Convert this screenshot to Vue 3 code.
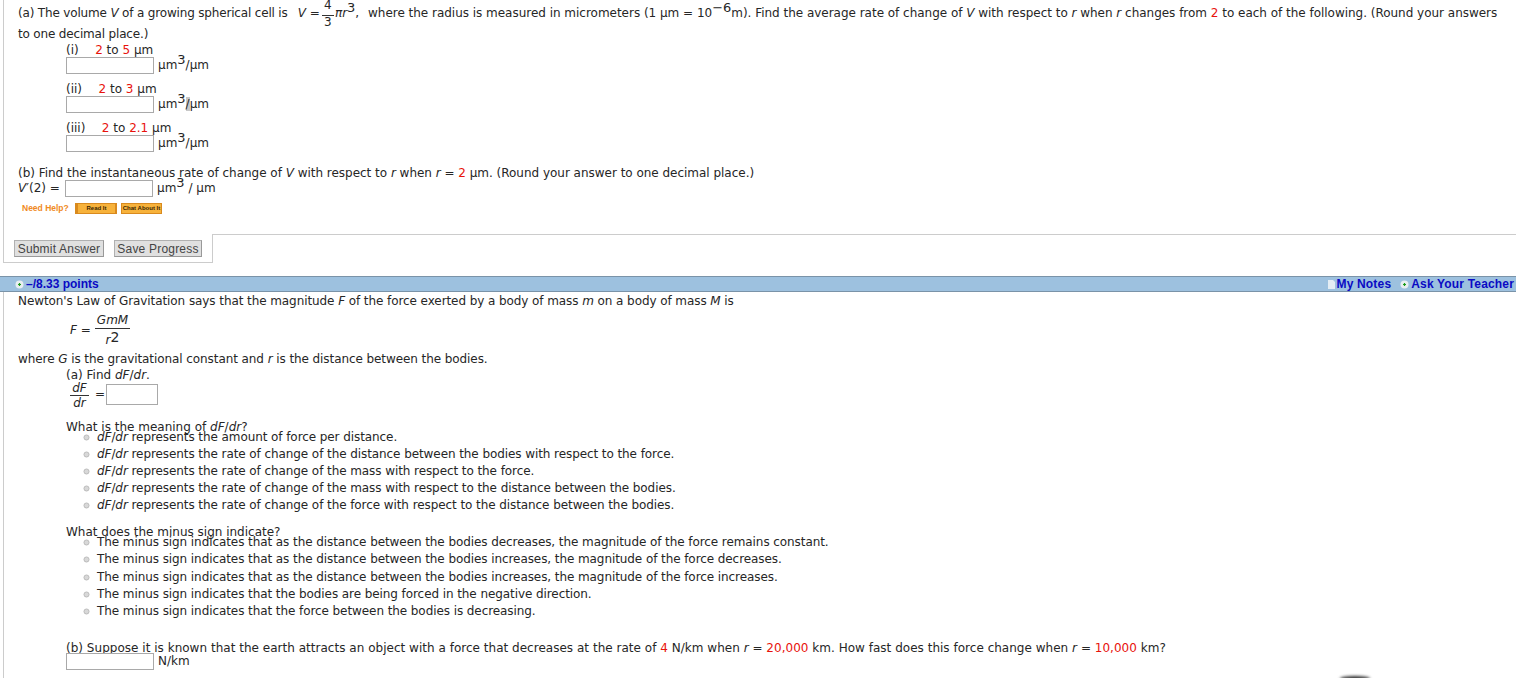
<script setup>
const meaning = [
  'represents the amount of force per distance.',
  'represents the rate of change of the distance between the bodies with respect to the force.',
  'represents the rate of change of the mass with respect to the force.',
  'represents the rate of change of the mass with respect to the distance between the bodies.',
  'represents the rate of change of the force with respect to the distance between the bodies.'
]
const minus = [
  'The minus sign indicates that as the distance between the bodies decreases, the magnitude of the force remains constant.',
  'The minus sign indicates that as the distance between the bodies increases, the magnitude of the force decreases.',
  'The minus sign indicates that as the distance between the bodies increases, the magnitude of the force increases.',
  'The minus sign indicates that the bodies are being forced in the negative direction.',
  'The minus sign indicates that the force between the bodies is decreasing.'
]
const parts = [
  { n: '(i)', a: '2', b: '5', hl: false },
  { n: '(ii)', a: '2', b: '3', hl: true },
  { n: '(iii)', a: '2', b: '2.1', hl: false }
]
</script>

<template>
  <div class="page">
    <section class="q1">
      <div class="line first">
        <span class="tight">(a) The volume <i>V</i> of a growing spherical cell is</span>
        <i class="v">V</i><span class="vq">=</span>
        <span class="frac small"><span class="num">4</span><span class="den">3</span></span><i class="pi">πr</i><span class="sup">3</span>,
        <span class="rest">where the radius is measured in micrometers (1 µm = 10<span class="sup">−6</span>m). Find the average rate of change of <i>V</i> with respect to <i>r</i> when <i>r</i> changes from <span class="red">2</span> to each of the following. (Round your answers</span>
      </div>
      <div class="line low second-line tight">to one decimal place.)</div>

      <div v-for="p in parts" :key="p.n" class="part">
        <div class="line low sub"><span class="pn">{{ p.n }}</span> &nbsp; <span class="red">{{ p.a }}</span> to <span class="red">{{ p.b }}</span> µm</div>
        <div class="line sub answer">
          <span class="box"></span>
          <span class="unit">µm<span class="sup">3</span><span :class="{ hl: p.hl }">/</span>µm</span>
        </div>
      </div>

      <div class="line low b-line">(b) Find the instantaneous rate of change of <i>V</i> with respect to <i>r</i> when <i>r</i> = <span class="red">2</span> µm. (Round your answer to one decimal place.)</div>
      <div class="line answer">
        <span class="vp"><i>V</i>′(2) =</span>
        <span class="box"></span>
        <span class="unit">µm<span class="sup">3</span> / µm</span>
      </div>
      <div class="help">
        <span class="need">Need Help?</span>
        <span class="hbtn read">Read It</span>
        <span class="hbtn chat">Chat About It</span>
      </div>
    </section>

    <div class="actions">
      <div class="btns">
        <button class="btn submit">Submit Answer</button>
        <button class="btn save">Save Progress</button>
      </div>
      <div class="rule"></div>
    </div>

    <header class="bar">
      <span class="bar-item pts">
        <svg class="ic" width="9" height="9" viewBox="0 0 9 9"><circle cx="4.5" cy="4.5" r="4" fill="#e8eef0" /><path d="M4.5 3v3M3 4.5h3" stroke="#1a9a1a" stroke-width="1.2" /></svg>
        –/8.33 points
      </span>
      <span class="bar-right">
        <span class="bar-item">
          <svg class="ic note" width="7" height="9" viewBox="0 0 7 9"><path d="M0 0h5l2 2v7H0z" fill="#e4edf4" /></svg>
          My Notes
        </span>
        <span class="bar-item">
          <svg class="ic" width="9" height="9" viewBox="0 0 9 9"><circle cx="4.5" cy="4.5" r="4" fill="#e8eef0" /><path d="M4.5 3v3M3 4.5h3" stroke="#1a9a1a" stroke-width="1.2" /></svg>
          Ask Your Teacher
        </span>
      </span>
    </header>

    <section class="q2">
      <div class="line cond">Newton's Law of Gravitation says that the magnitude <i>F</i> of the force exerted by a body of mass <i>m</i> on a body of mass <i>M</i> is</div>
      <div class="formula">
        <span class="feq"><i>F</i> =</span>
        <span class="frac big"><span class="num"><i>GmM</i></span><span class="den"><i>r</i><span class="sq">2</span></span></span>
      </div>
      <div class="line cond">where <i>G</i> is the gravitational constant and <i>r</i> is the distance between the bodies.</div>
      <div class="line sub">(a) Find <i>dF</i>/<i>dr</i>.</div>
      <div class="deriv">
        <span class="frac mid"><span class="num"><i>dF</i></span><span class="den"><i>dr</i></span></span>
        <span class="eq">=</span>
        <span class="box tall"></span>
      </div>
      <div class="line sub ask">What is the meaning of <i>dF</i>/<i>dr</i>?</div>
      <ul class="opts m">
        <li v-for="t in meaning" :key="t"><i>dF</i>/<i>dr</i> {{ t }}</li>
      </ul>
      <div class="line sub ask second">What does the minus sign indicate?</div>
      <ul class="opts n">
        <li v-for="t in minus" :key="t">{{ t }}</li>
      </ul>
      <div class="line sub last">(b) Suppose it is known that the earth attracts an object with a force that decreases at the rate of <span class="red">4</span> N/km when <i>r</i> = <span class="red">20,000</span> km. How fast does this force change when <i>r</i> = <span class="red">10,000</span> km?</div>
      <div class="line sub answer tail">
        <span class="box"></span>
        <span class="unit">N/km</span>
      </div>
    </section>

    <div class="smudge"></div>
  </div>
</template>

<style>
html, body { margin: 0; background: #fff; overflow: hidden; }
</style>

<style scoped>
.page {
  position: relative;
  width: 1516px;
  height: 678px;
  overflow: hidden;
  background: #fff;
  color: #262626;
  font: 12px/16px "DejaVu Sans", Verdana, sans-serif;
}
i { font-style: italic; }
.red { color: #e8120c; }
.line { height: 16px; line-height: 16px; white-space: nowrap; }
.line.low { line-height: 18px; }
.q1 {
  height: 234px;
  box-sizing: border-box;
  margin-left: 3px;
  padding: 5px 0 0 14px;
  border-left: 1px solid #ccc;
}
.tight { letter-spacing: -0.17px; }
.rest { letter-spacing: -0.02px; margin-left: 5px; }
.v { margin-left: 10px; }
.vq { margin-left: 4px; }
.pi { margin-left: 1px; }
.second-line { margin-top: 4px; }
.sub { margin-left: 48px; }
.part { margin-bottom: 7px; }
.pn { margin-right: 5px; }
.answer { display: flex; align-items: center; }
.box {
  display: block;
  box-sizing: border-box;
  width: 88px;
  height: 17px;
  border: 1px solid #a9a9a9;
  background: #fff;
  flex: none;
}
.unit { margin-left: 4px; }
.sup { font-size: 13px; position: relative; top: -5px; line-height: 0; }
.hl { background: #c8c8c8; }
.b-line { margin-top: 13px; letter-spacing: -0.02px; }
.vp { width: 47px; flex: none; }
.help { display: flex; align-items: center; height: 16px; margin: 4px 0 0 4px; font-family: "Liberation Sans", Arial, sans-serif; font-weight: 700; }
.need { color: #f08a24; font-size: 8.5px; width: 53px; }
.hbtn {
  box-sizing: border-box;
  height: 11px;
  font-size: 6px;
  line-height: 9px;
  text-align: center;
  color: #3a2500;
  background: #f7b23b;
  border: 1px solid #d98a1e;
  white-space: nowrap;
}
.read { width: 42px; border-left-width: 3px; border-right-width: 2px; }
.chat { width: 41px; margin-left: 4px; }
.actions { display: flex; height: 29px; margin-left: 3px; }
.btns {
  display: flex;
  gap: 10px;
  box-sizing: border-box;
  width: 210px;
  padding: 6px 0 0 10px;
  border-left: 1px solid #ccc;
  border-right: 1px solid #ccc;
  border-bottom: 1px solid #ccc;
}
.rule { flex: 1; border-top: 1px solid #ccc; }
.btn {
  box-sizing: border-box;
  height: 17px;
  padding: 1px 0 0;
  font: 12px/15px "Liberation Sans", Arial, sans-serif;
  letter-spacing: .2px;
  color: #444;
  background: #e0e0e0;
  border: 1px solid #b0b0b0;
  border-bottom-color: #999;
  border-right-color: #999;
}
.submit { width: 90px; }
.save { width: 88px; }
.bar {
  display: flex;
  justify-content: space-between;
  align-items: center;
  box-sizing: border-box;
  height: 16px;
  margin-top: 13px;
  padding: 0 2px 0 17px;
  background: #9dc1df;
  border-top: 1px solid #7a93a8;
  border-bottom: 1px solid #7a93a8;
  color: #0a0ac4;
  font: 700 12px/14px "Liberation Sans", Arial, sans-serif;
}
.bar-item { position: relative; display: inline-block; }
.ic { position: absolute; left: -11px; top: 3px; }
.ic.note { left: -9px; }
.pts { padding-left: 10px; margin-left: -1px; }
.pts .ic { left: -1px; }
.bar-right { display: flex; gap: 20px; letter-spacing: .17px; }
.q2 {
  height: 386px;
  box-sizing: border-box;
  margin-left: 3px;
  padding: 1px 0 0 14px;
  border-left: 1px solid #ccc;
  overflow: hidden;
}
.cond { letter-spacing: -0.08px; }
.formula {
  display: flex;
  align-items: center;
  height: 42px;
  margin-left: 52px;
}
.feq { width: 25px; }
.frac { display: inline-flex; flex-direction: column; align-items: center; vertical-align: middle; }
.frac .num { border-bottom: 1px solid #333; text-align: center; align-self: stretch; }
.frac.small { width: 12px; line-height: 13px; margin: -7px 0 -7px 2px; }
.frac.small .num { padding-bottom: 3px; }
.frac.big { width: 35px; }
.frac.big .num { line-height: 15px; padding-top: 3px; }
.frac.big .den { line-height: 22px; height: 22px; }
.sq { font-size: 14px; position: relative; top: -2px; line-height: 0; }
.deriv { display: flex; align-items: center; height: 28px; margin: -3px 0 0 52px; }
.frac.mid { width: 19px; line-height: 14px; position: relative; top: 1px; }
.frac.mid .num { line-height: 14px; }
.eq { margin-left: 6px; width: 11px; }
.box.tall { width: 52px; height: 21px; }
.ask { margin-top: 11px; }
.opts { list-style: none; margin: -6px 0 0 79px; padding: 0; letter-spacing: -0.08px; }
.opts li { position: relative; height: 17px; line-height: 17px; white-space: nowrap; }
.opts li::before {
  content: "";
  position: absolute;
  left: -14px;
  top: 5px;
  width: 5px;
  height: 5px;
  border-radius: 50%;
  background: #d8d8d8;
  border: 1px solid #b5b5b5;
  transform: scale(.85);
}
.second { margin-top: 10px; }
.opts.n li:nth-child(n+3) { top: 1px; }
.last { margin-top: 21px; letter-spacing: .02px; }
.tail { margin-top: -3px; height: 17px; }
.tail .unit { margin-top: -2px; }
.smudge {
  position: absolute;
  left: 1340px;
  bottom: -3px;
  width: 30px;
  height: 5px;
  border-radius: 50%;
  background: #333;
  filter: blur(1.5px);
}
</style>
